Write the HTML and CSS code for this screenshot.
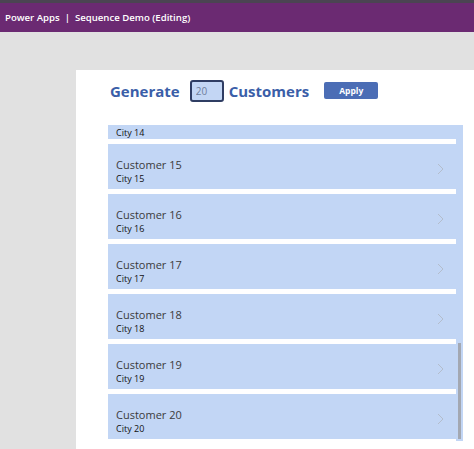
FILE: index.html
```html
<!DOCTYPE html>
<html lang="en">
<head>
  <meta charset="UTF-8" />
  <title>Sequence Demo</title>
  <link rel="stylesheet" href="styles.css">
</head>
<body>
  <div class="topbar">Power Apps &nbsp;|&nbsp; Sequence Demo (Editing)</div>
  <div class="stage">
    <div class="screen">
      <div class="header">
        <span class="title">Generate</span>
        <input class="count" type="text" value="20" />
        <span class="title">Customers</span>
        <button class="apply">Apply</button>
      </div>
      <div class="gallery">
        <div class="rows" id="rows">
          <div class="row first"><div class="city">City 14</div></div>
        </div>
        <div class="track"><div class="thumb"></div></div>
      </div>
    </div>
  </div>

<script>
  const rows = document.getElementById("rows");
  for (let i = 15; i <= 20; i++) {
    const div = document.createElement("div");
    div.className = "row";
    div.innerHTML = `
      <div>
        <div class="name">Customer ${i}</div>
        <div class="city">City ${i}</div>
      </div>
      <svg class="chev" width="7" height="12" viewBox="0 0 7 12"><path d="M1 1 L6 6 L1 11" fill="none" stroke="#b3bdcc" stroke-width="1"/></svg>
    `;
    rows.appendChild(div);
  }
</script>
</body>
</html>
```

FILE: styles.css
```css
body {
  margin: 0;
  width: 474px;
  height: 449px;
  overflow: hidden;
  font-family: "Open Sans", "Noto Sans", sans-serif;
  background: #e1e1e1;
}
.topbar {
  height: 29px;
  border-top: 3px solid #4b4452;
  background: #6b2a72;
  color: #fff;
  font-size: 9.6px;
  font-weight: 600;
  line-height: 29px;
  padding-left: 5px;
  white-space: pre;
}
.stage {
  padding: 38px 0 0 76px;
}
.screen {
  background: #fff;
  height: 379px;
  padding: 0 11px 0 32px;
}
.header {
  display: flex;
  align-items: center;
  height: 41px;
  margin-bottom: 14px;
  padding-left: 2px;
}
.title {
  color: #3a5ea8;
  font-size: 15px;
  font-weight: 700;
}
.count {
  width: 22px;
  height: 16px;
  margin: 0 5px 0 10px;
  padding: 1px 4px;
  border: 2px solid #2f3d63;
  border-radius: 3px;
  background: #c3d6f4;
  color: #6f7f9c;
  font-family: inherit;
  font-size: 10px;
}
.apply {
  margin-left: 15px;
  width: 54px;
  height: 17px;
  padding: 0;
  border: none;
  border-radius: 2px;
  background: #4b6db5;
  color: #fff;
  font-family: inherit;
  font-size: 8.5px;
  font-weight: 700;
}
.gallery {
  display: flex;
  height: 316px;
  overflow: hidden;
}
.rows {
  flex: 1;
}
.row {
  display: flex;
  align-items: center;
  justify-content: space-between;
  height: 45px;
  margin-bottom: 5px;
  padding: 10px 12px 0 8px;
  box-sizing: border-box;
  background: #c2d6f5;
}
.row.first {
  height: 14px;
  padding-top: 0;
}
.chev {
  margin-top: -6px;
}
.name {
  color: #3b3b3b;
  font-size: 11px;
  line-height: 14px;
}
.city {
  color: #111;
  font-size: 9px;
  line-height: 13px;
}
.track {
  width: 7px;
  background: #c2d6f5;
  padding-top: 218px;
}
.thumb {
  width: 3px;
  height: 96px;
  margin-left: 2px;
  background: #a3a8b2;
}
```
